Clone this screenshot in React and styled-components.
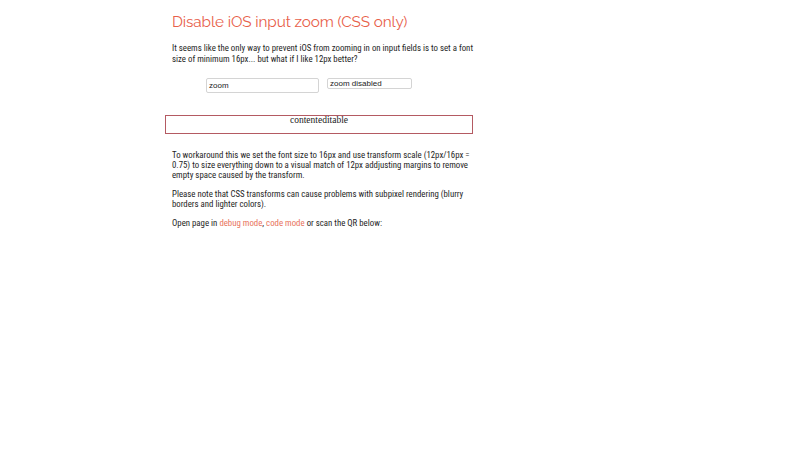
import React from "react";
import styled, { createGlobalStyle } from "styled-components";

const Global = createGlobalStyle`
  html, body { margin: 0; padding: 0; background: #fff; }
  body { width: 800px; height: 450px; overflow: hidden; }
`;

const Page = styled.div`
  width: 800px;
  height: 450px;
  background: #fff;
  display: flex;
  flex-direction: column;
  align-items: flex-start;
  padding-left: 165px;
  box-sizing: border-box;
  font-family: "Roboto Condensed", "Liberation Sans Narrow", Roboto, sans-serif;
  color: #222;
`;

const Column = styled.div`
  width: 307px;
  display: flex;
  flex-direction: column;
`;

const Inner = styled.div`
  padding-left: 7px;
  display: flex;
  flex-direction: column;
`;

const Title = styled.h1`
  margin: 12px 0 0 0;
  font-family: Raleway, "Open Sans", sans-serif;
  font-weight: 400;
  font-size: 15.3px;
  line-height: 20px;
  color: #e8604a;
  letter-spacing: -0.1px;
`;

const Para = styled.p`
  margin: ${(p) => p.$mt || 0}px 0 0 0;
  font-size: 8.8px;
  line-height: ${(p) => p.$lh || 10}px;
  width: 304px;
  color: #1e1e1e;
`;

const InputRow = styled.div`
  display: flex;
  align-items: flex-start;
  gap: 8px;
  margin-top: 13px;
  padding-left: 34px;
`;

const Input = styled.div`
  box-sizing: border-box;
  width: ${(p) => p.$w}px;
  height: ${(p) => p.$h}px;
  border: 1px solid #d4d4d4;
  border-radius: 2px;
  font-family: "Liberation Sans", Arial, sans-serif;
  font-size: ${(p) => p.$fs}px;
  line-height: ${(p) => p.$h - 2}px;
  padding-left: 2px;
  color: #222;
  background: #fff;
`;

const Editable = styled.div`
  margin-top: 22px;
  box-sizing: border-box;
  width: 308px;
  height: 19px;
  border: 1px solid #b45a62;
  font-family: "Liberation Serif", "Times New Roman", serif;
  font-size: 9.5px;
  line-height: 9px;
  text-align: center;
  color: #222;
`;

const Link = styled.a`
  color: #e8735c;
  text-decoration: none;
`;

export default function App() {
  return (
    <>
      <Global />
      <Page>
        <Column>
          <Inner>
            <Title>Disable iOS input zoom (CSS only)</Title>
            <Para $mt={11} $lh={11}>
              It seems like the only way to prevent iOS from zooming in on input fields is to set a font size of minimum 16px... but what if I like 12px better?
            </Para>
            <InputRow>
              <Input $w={113} $h={15} $fs={8}>zoom</Input>
              <Input $w={85} $h={11} $fs={8}>zoom disabled</Input>
            </InputRow>
          </Inner>
          <Editable>contenteditable</Editable>
          <Inner>
            <Para $mt={16}>
              To workaround this we set the font size to 16px and use transform scale (12px/16px = 0.75) to size everything down to a visual match of 12px addjusting margins to remove empty space caused by the transform.
            </Para>
            <Para $mt={9}>
              Please note that CSS transforms can cause problems with subpixel rendering (blurry borders and lighter colors).
            </Para>
            <Para $mt={9}>
              Open page in <Link href="#">debug mode</Link>, <Link href="#">code mode</Link> or scan the QR below:
            </Para>
          </Inner>
        </Column>
      </Page>
    </>
  );
}
